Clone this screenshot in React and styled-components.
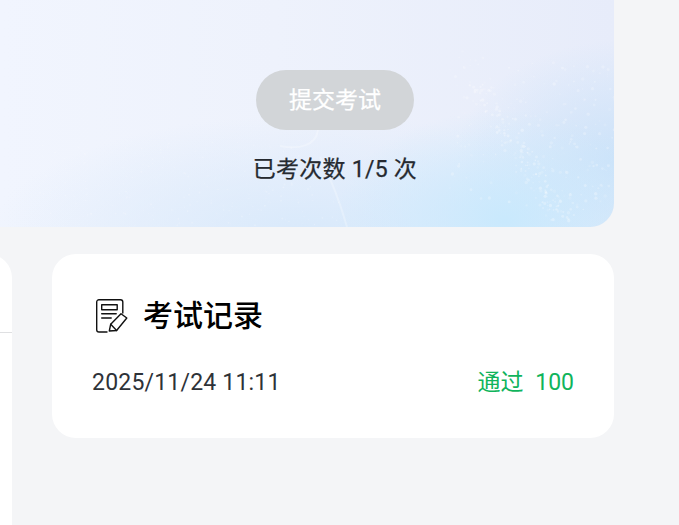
import React from 'react';
import styled, { createGlobalStyle } from 'styled-components';

const GlobalStyle = createGlobalStyle`
  html, body {
    margin: 0;
    padding: 0;
    height: 100%;
    background: #f4f5f7;
    overflow: hidden;
  }
  * {
    box-sizing: border-box;
  }
`;

const Page = styled.div`
  width: 679px;
  height: 525px;
  overflow: hidden;
  display: flex;
  flex-direction: column;
  gap: 27px;
  padding-right: 65px;
  background: #f4f5f7;
  font-family: Roboto, 'Noto Sans CJK SC', sans-serif;
`;

const Hero = styled.section`
  position: relative;
  flex: none;
  height: 227px;
  padding: 70px 0 0 56px;
  display: flex;
  flex-direction: column;
  align-items: center;
  overflow: hidden;
  border-radius: 0 0 24px 0;
  background:
    radial-gradient(ellipse 170px 110px at 505px 220px, #c9e9fd 0%, rgba(201, 233, 253, 0) 100%),
    radial-gradient(ellipse 170px 120px at 625px 160px, #cbe2f9 0%, rgba(203, 226, 249, 0) 100%),
    radial-gradient(ellipse 320px 120px at 310px 235px, #d8e9fb 0%, rgba(216, 233, 251, 0) 100%),
    linear-gradient(90deg, #f1f5fe 0%, #eef2fc 45%, #e7ecfa 100%);
`;

const HeroArt = styled.svg`
  position: absolute;
  left: 0;
  top: 0;
  width: 100%;
  height: 100%;
`;

const SubmitButton = styled.button`
  position: relative;
  width: 158px;
  height: 60px;
  border: 0;
  border-radius: 30px;
  background: #d2d5d8;
  color: #fff;
  font: 400 23px/60px Roboto, 'Noto Sans CJK SC', sans-serif;
  -webkit-text-stroke: 0.25px #fff;
`;

const Attempts = styled.p`
  position: relative;
  margin: 24px 0 0;
  color: #262a30;
  font-size: 23px;
  font-weight: 400;
  letter-spacing: 0.25px;
  line-height: 32px;
  -webkit-text-stroke: 0.25px #262a30;
`;

const Row = styled.div`
  display: flex;
  gap: 40px;
  margin-left: -300px;
`;

const SideCard = styled.section`
  flex: none;
  width: 312px;
  height: 300px;
  border-radius: 0 24px 0 0;
  background: #fff;
`;

const SideDivider = styled.div`
  height: 1px;
  margin-top: 78px;
  background: #dfe0e2;
`;

const RecordCard = styled.section`
  flex: 1;
  height: 184px;
  padding: 44px 40px 0;
  border-radius: 24px;
  background: #fff;
`;

const RecordHeader = styled.header`
  display: flex;
  align-items: center;
  gap: 15px;
  height: 36px;
  padding-left: 4px;
`;

const RecordTitle = styled.h2`
  margin: 0;
  color: #000;
  font-size: 30px;
  font-weight: 500;
  line-height: 36px;
`;

const RecordRow = styled.div`
  display: flex;
  justify-content: space-between;
  margin-top: 33px;
  font-size: 23px;
  line-height: 32px;
`;

const RecordDate = styled.span`
  color: #2e3238;
  letter-spacing: 0.2px;
`;

const RecordResult = styled.span`
  color: #10b45c;
  word-spacing: 6px;
`;

function dotField() {
  // bands of dots following the curves of the artwork
  const dots = [];
  let seed = 7;
  const rnd = () => {
    seed = (seed * 16807) % 2147483647;
    return seed / 2147483647;
  };
  for (let i = 0; i < 220; i++) {
    const x = 450 + rnd() * 165;
    const y = 50 + (x - 450) * 0.1 + rnd() * 150;
    dots.push({ x, y, r: 0.6 + rnd() * 1.2, o: 0.08 + rnd() * 0.2 });
  }
  for (let i = 0; i < 150; i++) {
    const t = rnd();
    const x = 478 + t * 85 + (rnd() - 0.5) * 22;
    const y = 85 + t * 135 + (rnd() - 0.5) * 16;
    dots.push({ x, y, r: 0.7 + rnd() * 1, o: 0.1 + rnd() * 0.22 });
  }
  for (let i = 0; i < 260; i++) {
    const x = 40 + rnd() * 300;
    const y = 140 + rnd() * 87;
    dots.push({ x, y, r: 0.5 + rnd() * 0.5, o: 0.08 + rnd() * 0.16 });
  }
  return dots;
}

const RecordIcon = () => (
  <svg width="32" height="34" viewBox="0 0 32 34" fill="none" stroke="#111" strokeWidth="1.4" strokeLinecap="round" strokeLinejoin="round">
    <path d="M11 33H3a2.300 2.300 0 0 1-2.300-2.300V3A2.300 2.300 0 0 1 3 .7h21.500A2.300 2.300 0 0 1 26.800 3v11" />
    <rect x="5.700" y="5.700" width="15.500" height="5" />
    <path d="M5.700 14.700h14.500M5.700 19h9.500" />
    <path d="M13.300 32l1.400-6.800L25 14.700l5.800 4.300L20.600 31.500z" />
    <path d="M14.700 25.200l5.900 6.300" />
  </svg>
);

export default function App() {
  const dots = dotField();
  return (
    <Page>
      <GlobalStyle />
      <Hero>
        <HeroArt viewBox="0 0 614 227">
          <path d="M280 146c20 4 36-1 38-16M320 157c10 20 20 45 27 70" fill="none" stroke="#fff" strokeOpacity="0.25" strokeWidth="2" />
          {dots.map((d, i) => (
            <circle key={i} cx={d.x} cy={d.y} r={d.r} fill="#fff" fillOpacity={d.o} />
          ))}
        </HeroArt>
        <SubmitButton disabled>提交考试</SubmitButton>
        <Attempts>已考次数 1/5 次</Attempts>
      </Hero>
      <Row>
        <SideCard>
          <SideDivider />
        </SideCard>
        <RecordCard>
          <RecordHeader>
            <RecordIcon />
            <RecordTitle>考试记录</RecordTitle>
          </RecordHeader>
          <RecordRow>
            <RecordDate>2025/11/24 11:11</RecordDate>
            <RecordResult>通过 100</RecordResult>
          </RecordRow>
        </RecordCard>
      </Row>
    </Page>
  );
}
